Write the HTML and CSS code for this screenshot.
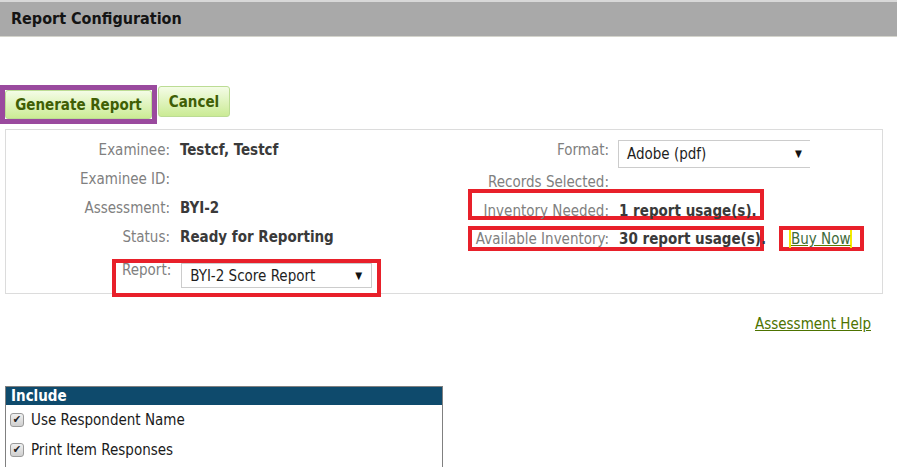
FILE: index.html
```html
<!DOCTYPE html>
<html>
<head>
<meta charset="utf-8">
<link rel="stylesheet" href="styles.css">
</head>
<body>
<div class="header"><h1 class="title">Report Configuration</h1></div>
<div class="actions">
  <span class="mark-purple"><button class="btn btn-generate">Generate Report</button></span>
  <button class="btn btn-cancel">Cancel</button>
</div>
<div class="panel">
  <div class="col-left">
    <div class="row"><span class="label">Examinee:</span><span class="value">Testcf, Testcf</span></div>
    <div class="row"><span class="label">Examinee ID:</span><span class="value"></span></div>
    <div class="row"><span class="label">Assessment:</span><span class="value">BYI-2</span></div>
    <div class="row"><span class="label">Status:</span><span class="value">Ready for Reporting</span></div>
    <div class="report-box">
      <span class="report-label">Report:</span>
      <div class="select select-report"><span>BYI-2 Score Report</span><span class="arrow">▼</span></div>
    </div>
  </div>
  <div class="col-right">
    <div class="rrow format-row"><span class="rlabel">Format:</span><div class="select select-format"><span>Adobe (pdf)</span><span class="arrow">▼</span></div></div>
    <div class="rrow records-row"><span class="rlabel">Records Selected:</span></div>
    <div class="rrow red-box needed-row"><span class="rlabel">Inventory Needed:</span><span class="rvalue">1 report usage(s).</span></div>
    <div class="avail-line">
      <div class="rrow red-box avail-row"><span class="rlabel">Available Inventory:</span><span class="rvalue">30 report usage(s).</span></div>
      <div class="red-box buy-box"><a class="buy-link" href="#">Buy Now</a></div>
    </div>
  </div>
</div>
<div class="help-row"><a class="help-link" href="#">Assessment Help</a></div>
<div class="include">
  <div class="include-head">Include</div>
  <div class="check-row"><span class="checkbox">✔</span><span>Use Respondent Name</span></div>
  <div class="check-row"><span class="checkbox">✔</span><span>Print Item Responses</span></div>
</div>
</body>
</html>
```
FILE: styles.css
```css
html, body {
  margin: 0;
  padding: 0;
  background: #ffffff;
}
body {
  font-family: "DejaVu Sans Condensed", "DejaVu Sans", sans-serif;
  font-size: 15px;
  color: #333333;
  width: 897px;
  height: 467px;
  overflow: hidden;
}
.header {
  border-top: 2px solid #d8d8d8;
  border-bottom: 1px solid #d4d4cc;
  background: #a9a9a9;
  height: 34px;
  display: flex;
  align-items: center;
}
.title {
  margin: -2px 0 0 11px;
  font-size: 16px;
  font-weight: bold;
  color: #141414;
}
.actions {
  display: flex;
  align-items: flex-start;
  margin-top: 48px;
  height: 39px;
}
.mark-purple {
  display: inline-flex;
  border: 5px solid #9a4a9e;
}
.btn {
  font-family: inherit;
  font-weight: bold;
  font-size: 15px;
  color: #3f5e05;
  background: linear-gradient(#f4fce6, #cbeb95);
  border: 1px solid #bcdc94;
  border-radius: 3px;
  padding: 0;
  margin: 0;
}
.btn-generate {
  width: 147px;
  height: 29px;
}
.btn-cancel {
  width: 72px;
  height: 31px;
  margin-top: 1px;
  margin-left: 1px;
}
.panel {
  margin: 5px 0 0 5px;
  width: 878px;
  height: 165px;
  box-sizing: border-box;
  border: 1px solid #dcdcdc;
  display: flex;
}
.col-left {
  width: 462px;
  padding-top: 6px;
}
.row {
  display: flex;
  height: 29px;
  line-height: 29px;
  gap: 10px;
}
.label {
  width: 164px;
  text-align: right;
  color: #808080;
}
.value {
  font-weight: bold;
  color: #3a3a3a;
}
.report-box {
  display: inline-flex;
  margin: 7px 0 0 106px;
  border: 4px solid #e8202a;
  padding: 0 5px 5px 6px;
  gap: 10px;
  align-items: flex-start;
}
.report-label {
  color: #808080;
  line-height: 18px;
  margin-top: -2px;
}
.select {
  display: flex;
  justify-content: space-between;
  align-items: center;
  box-sizing: border-box;
  border: 1px solid #cccccc;
  background: #ffffff;
  color: #1e1e1e;
  font-size: 15px;
}
.select-report {
  width: 191px;
  height: 25px;
  padding: 0 9px 0 8px;
}
.select-format {
  width: 192px;
  height: 28px;
  padding: 0 8px 0 8px;
  border-right: none;
  margin-left: -1px;
}
.arrow {
  font-size: 10px;
  color: #111111;
}
.col-right {
  padding-top: 10px;
}
.rrow {
  display: flex;
  gap: 10px;
  padding-left: 4px;
  line-height: 18px;
}
.rlabel {
  width: 137px;
  text-align: right;
  color: #808080;
  white-space: nowrap;
}
.rvalue {
  width: 141px;
  font-weight: bold;
  color: #3a3a3a;
  white-space: nowrap;
}
.format-row {
  height: 28px;
}
.format-row .rlabel {
  padding-top: 1px;
}
.records-row {
  margin-top: 5px;
}
.red-box {
  border: 4px solid #e8202a;
  box-sizing: border-box;
}
.needed-row {
  padding-left: 0;
  margin-top: -2px;
  width: 296px;
  height: 31px;
  padding-top: 9px;
}
.avail-line {
  display: flex;
  margin-top: 6px;
}
.avail-row {
  padding-left: 0;
  width: 296px;
  height: 25px;
}
.buy-box {
  margin-left: 15px;
  height: 25px;
  padding: 0 8px 0 6px;
  line-height: 18px;
}
.buy-link {
  display: inline-block;
  border-left: 2px solid #f5ea00;
  border-right: 2px solid #f5ea00;
  color: #3e6a3a;
  text-decoration: underline;
  text-decoration-color: #5a7a00;
}
.help-row {
  display: flex;
  justify-content: flex-end;
  padding-right: 26px;
  margin-top: 21px;
  line-height: 18px;
}
.help-link {
  color: #4d7300;
  text-decoration: underline;
}
.include {
  margin: 53px 0 0 5px;
  width: 436px;
  border: 1px solid #808080;
  border-bottom: none;
  height: 100px;
}
.include-head {
  background: #0e4a6c;
  color: #ffffff;
  font-weight: bold;
  font-size: 15px;
  height: 18px;
  line-height: 18px;
  padding-left: 5px;
}
.check-row {
  display: flex;
  align-items: center;
  gap: 7px;
  height: 30px;
  padding-left: 4px;
  color: #1a1a1a;
}
.checkbox {
  width: 12px;
  height: 12px;
  border: 1px solid #9a9a9a;
  border-radius: 3px;
  background: linear-gradient(#f0f0f0, #cfcfcf);
  font-size: 11px;
  line-height: 12px;
  text-align: center;
  color: #222222;
}
```
